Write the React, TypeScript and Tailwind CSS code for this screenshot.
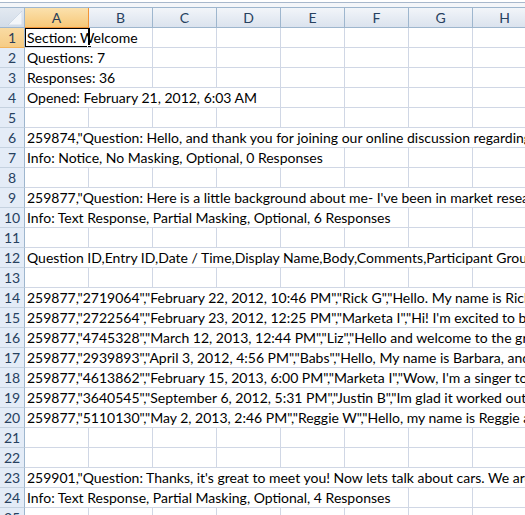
import React from "react";
import { clsx } from "clsx";

const COLUMNS = ["A", "B", "C", "D", "E", "F", "G", "H"];

interface Row {
  text?: string,
  span?: number,
}

const rows: Row[] = [
  { text: "Section: Welcome", span: 2 },
  { text: "Questions: 7", span: 2 },
  { text: "Responses: 36", span: 2 },
  { text: "Opened: February 21, 2012, 6:03 AM", span: 4 },
  {},
  { text: "259874,\"Question: Hello, and thank you for joining our online discussion regarding cars and driving habits.\"", span: 8 },
  { text: "Info: Notice, No Masking, Optional, 0 Responses", span: 5 },
  {},
  { text: "259877,\"Question: Here is a little background about me- I've been in market research for many years.\"", span: 8 },
  { text: "Info: Text Response, Partial Masking, Optional, 6 Responses", span: 6 },
  {},
  { text: "Question ID,Entry ID,Date / Time,Display Name,Body,Comments,Participant Groups", span: 8 },
  {},
  { text: "259877,\"2719064\",\"February 22, 2012, 10:46 PM\",\"Rick G\",\"Hello. My name is Rick and I live in", span: 8 },
  { text: "259877,\"2722564\",\"February 23, 2012, 12:25 PM\",\"Marketa I\",\"Hi! I'm excited to be here", span: 8 },
  { text: "259877,\"4745328\",\"March 12, 2013, 12:44 PM\",\"Liz\",\"Hello and welcome to the group", span: 8 },
  { text: "259877,\"2939893\",\"April 3, 2012, 4:56 PM\",\"Babs\",\"Hello, My name is Barbara, and I", span: 8 },
  { text: "259877,\"4613862\",\"February 15, 2013, 6:00 PM\",\"Marketa I\",\"Wow, I'm a singer too", span: 8 },
  { text: "259877,\"3640545\",\"September 6, 2012, 5:31 PM\",\"Justin B\",\"Im glad it worked out", span: 8 },
  { text: "259877,\"5110130\",\"May 2, 2013, 2:46 PM\",\"Reggie W\",\"Hello, my name is Reggie and", span: 8 },
  {},
  {},
  { text: "259901,\"Question: Thanks, it's great to meet you! Now lets talk about cars. We are curious", span: 8 },
  { text: "Info: Text Response, Partial Masking, Optional, 4 Responses", span: 6 },
  {},
];

const CornerCell: React.FC = () => (
  <div className="relative h-[20px] w-[25px] shrink-0 border-r border-b border-[#9eb6ce] bg-gradient-to-b from-[#e3e9f1] to-[#d2dce8]">
    <svg className="absolute right-[2px] bottom-[2px]" width="14" height="14" viewBox="0 0 14 14">
      <polygon points="14,0 14,14 0,14" fill="#f3f6fa" stroke="#b7c6d8" strokeWidth="0.5" />
    </svg>
  </div>
);

const ColumnHeader: React.FC<{ label: string, selected: boolean }> = ({ label, selected }) => (
  <div
    className={clsx(
      "flex h-[20px] w-[64px] shrink-0 items-center justify-center border-r border-b text-[14px] leading-none",
      selected
        ? "border-[#f29436] bg-gradient-to-b from-[#fbe1ad] to-[#f7c878] text-[#2b3e58]"
        : "border-[#9eb6ce] bg-gradient-to-b from-[#f2f5f9] to-[#dbe3ee] text-[#27415f]",
    )}
  >
    {label}
  </div>
);

const SheetRow: React.FC<{ index: number, row: Row }> = ({ index, row }) => {
  const span = row.text ? row.span ?? 1 : 0;
  const blanks = COLUMNS.length - span;
  const isActive = index === 1;

  return (
    <div className="flex h-[20px]">
      <div
        className={clsx(
          "flex w-[25px] shrink-0 items-center justify-center border-r border-b text-[14px] leading-none",
          isActive
            ? "border-r-[#9eb6ce] border-b-[#f2b45e] bg-gradient-to-b from-[#f9dba3] to-[#f6cc85] text-[#2b3e58]"
            : "border-r-[#9eb6ce] border-b-[#c5d2e0] bg-[#e4ecf7] text-[#27415f]",
        )}
      >
        {index}
      </div>
      {span > 0 ? (
        <div
          className="relative shrink-0 overflow-hidden whitespace-nowrap border-r border-b border-[#d0d7e5] pl-[2px] text-[14px] leading-[20px] text-black"
          style={{ width: span * 64 }}
        >
          {row.text}
          {isActive ? (
            <div className="absolute top-[-1px] left-[-1px] h-[21px] w-[66px] border-2 border-black">
              <div className="absolute right-[-4px] bottom-[-4px] h-[5px] w-[5px] border border-white bg-black" />
            </div>
          ) : null}
        </div>
      ) : null}
      {Array.from({ length: blanks }).map((_, i) => (
        // eslint-disable-next-line react/no-array-index-key
        <div key={i} className="h-[20px] w-[64px] shrink-0 border-r border-b border-[#d0d7e5] bg-white" />
      ))}
    </div>
  );
};

export default function App() {
  return (
    <div
      className="h-[515px] w-[525px] overflow-hidden bg-white"
      style={{ fontFamily: "Lato, \"Liberation Sans\", sans-serif" }}
    >
      <div className="h-[6px] border-b border-[#9eb6ce] bg-[#f4f6f9]">
        <div className="mt-[2px] h-px w-full bg-[#a8b8cc]" />
      </div>
      <div className="flex">
        <CornerCell />
        {COLUMNS.map((label) => (
          <ColumnHeader key={label} label={label} selected={label === "A"} />
        ))}
      </div>
      {rows.map((row, i) => (
        // eslint-disable-next-line react/no-array-index-key
        <SheetRow key={i} index={i + 1} row={row} />
      ))}
    </div>
  );
}
